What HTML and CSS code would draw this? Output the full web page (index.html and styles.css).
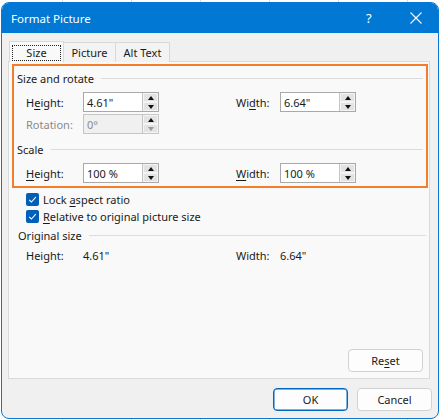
FILE: index.html
```html
<!DOCTYPE html>
<html>
<head>
<meta charset="utf-8">
<link rel="stylesheet" href="styles.css">
</head>
<body>
<div class="window">
  <div class="titlebar">
    <span class="title">Format Picture</span>
    <span class="help">?</span>
    <span class="close"><svg width="12" height="12" viewBox="0 0 12 12"><path d="M0.5 0.5L11.5 11.5M11.5 0.5L0.5 11.5" stroke="#fff" stroke-width="1.1" fill="none"/></svg></span>
  </div>
  <div class="client">
    <div class="tabs">
      <div class="tab active"><span class="focus">Size</span></div>
      <div class="tab t2">Picture</div>
      <div class="tab t3">Alt Text</div>
    </div>
    <div class="panel">
      <div class="highlight">
        <div class="group"><span>Size and rotate</span><i class="rule"></i></div>
        <div class="row r1">
          <div class="field"><label>H<u>e</u>ight:</label><div class="spin"><span class="val">4.61"</span><div class="btns"><b class="up"></b><b class="dn"></b></div></div></div>
          <div class="field f2"><label>Wi<u>d</u>th:</label><div class="spin"><span class="val">6.64"</span><div class="btns"><b class="up"></b><b class="dn"></b></div></div></div>
        </div>
        <div class="row r2 disabled">
          <div class="field"><label>Rotation:</label><div class="spin"><span class="val">0°</span><div class="btns"><b class="up"></b><b class="dn"></b></div></div></div>
        </div>
        <div class="group g2"><span>Scale</span><i class="rule"></i></div>
        <div class="row r3">
          <div class="field"><label><u>H</u>eight:</label><div class="spin"><span class="val">100 %</span><div class="btns"><b class="up"></b><b class="dn"></b></div></div></div>
          <div class="field f2"><label><u>W</u>idth:</label><div class="spin"><span class="val">100 %</span><div class="btns"><b class="up"></b><b class="dn"></b></div></div></div>
        </div>
      </div>
      <div class="check c1"><span class="box"><svg width="13" height="13" viewBox="0 0 13 13"><path d="M3.2 6.8L5.4 9L9.8 4.2" stroke="#fff" stroke-width="1.1" fill="none"/></svg></span><span>Lock <u>a</u>spect ratio</span></div>
      <div class="check c2"><span class="box"><svg width="13" height="13" viewBox="0 0 13 13"><path d="M3.2 6.8L5.4 9L9.8 4.2" stroke="#fff" stroke-width="1.1" fill="none"/></svg></span><span><u>R</u>elative to original picture size</span></div>
      <div class="group g3"><span>Original size</span><i class="rule"></i></div>
      <div class="info">
        <div class="ifield"><span class="ilabel">Height:</span><span>4.61"</span></div>
        <div class="ifield f2"><span class="ilabel">Width:</span><span>6.64"</span></div>
      </div>
      <div class="btn reset">Re<u>s</u>et</div>
    </div>
    <div class="footer">
      <div class="btn ok">OK</div>
      <div class="btn">Cancel</div>
    </div>
  </div>
</div>
</body>
</html>
```
FILE: styles.css
```css
* { box-sizing: border-box; }
html, body { margin: 0; padding: 0; }
body {
  width: 440px; height: 420px; overflow: hidden;
  background: #fff;
  background-image: repeating-linear-gradient(90deg, transparent 0 62px, #dcdcdc 62px 63px, transparent 63px 69px);
  font-family: "Noto Sans", "Open Sans", sans-serif;
  font-size: 11px;
  color: #1a1a1a;
  white-space: nowrap;
}
u { text-decoration-thickness: 1px; text-underline-offset: 2px; }
.window {
  margin: 2px 0 0 1px;
  width: 438px; height: 417px;
  border: 1px solid #0a78d4;
  border-radius: 8px;
  overflow: hidden;
  background: #f0f0f0;
  display: flex; flex-direction: column;
}
.titlebar {
  height: 30px; background: #0078d4; color: #fff;
  display: flex; align-items: center;
  font-size: 11.5px;
}
.title { margin-left: 9px; flex: 1; }
.help { width: 12px; margin-right: 32px; font-size: 13px; }
.close { width: 12px; height: 12px; margin-right: 16px; display: flex; }
.client { flex: 1; display: flex; flex-direction: column; }
.tabs { display: flex; align-items: flex-end; margin: 8px 0 -1px 7px; height: 21px; position: relative; z-index: 1; }
.tab {
  height: 20px; border: 1px solid #d9d9d9; border-bottom: none;
  background: #f3f3f3; display: flex; align-items: center; justify-content: center;
  margin-left: -1px;
}
.tab.t2 { width: 53px; }
.tab.t3 { width: 55px; }
.tab.active { height: 21px; width: 55px; background: #f9f9f9; margin-left: 0; padding: 2px 2px 1px; }
.focus { border: 1px dotted #222; width: 100%; height: 16px; display: flex; align-items: center; justify-content: center; }
.panel {
  margin-left: 6px; width: 422px; height: 318px;
  border: 1px solid #dadada; background: #f9f9f9;
  display: flex; flex-direction: column;
}
.highlight {
  margin: 2px 0 0 3px; width: 416px; height: 124px;
  border: 2px solid #f47d2a;
}
.group { display: flex; align-items: center; height: 16px; margin-top: 4px; padding-left: 3px; padding-right: 3px; }
.group .rule { flex: 1; height: 1px; background: #dcdcdc; margin-left: 7px; }
.group.g2 { margin-top: 7px; }
.group.g3 { margin-top: 4px; padding-left: 9px; padding-right: 3px; }
.row { display: flex; height: 20px; padding-left: 12px; align-items: center; }
.r1 { margin-top: 6px; }
.r2 { margin-top: 2px; }
.r3 { margin-top: 6px; }
.field { display: flex; align-items: center; width: 210px; flex-shrink: 0; }
.field.f2 { width: auto; }
.field label { width: 57px; }
.field.f2 label { width: 44px; }
.spin {
  width: 76px; height: 20px; border: 1px solid #a9a9a9; background: #fff;
  display: flex; align-items: center;
}
.spin .val { flex: 1; padding-left: 3px; }
.btns { width: 16px; height: 18px; display: flex; flex-direction: column; border-left: 1px solid #c4c4c4; }
.btns b { flex: 1; background: #e3e3e3; border: 1px solid #f4f4f4; position: relative; }
.btns b::after { content: ""; position: absolute; left: 4px; top: 2px; border-left: 3.5px solid transparent; border-right: 3.5px solid transparent; }
.btns .up::after { border-bottom: 4px solid #111; }
.btns .dn::after { border-top: 4px solid #111; top: 2px; }
.disabled label { color: #8a8a8a; }
.disabled .spin { background: #f0f0f0; border-color: #c6c6c6; }
.disabled .val { color: #8a8a8a; }
.disabled .btns .dn::after { border-top-color: #9a9a9a; }
.check { display: flex; align-items: center; height: 14px; padding-left: 17px; }
.c1 { margin-top: 4px; }
.c2 { margin-top: 3px; }
.box { width: 13px; height: 13px; border-radius: 2px; background: #005fb8; margin-right: 4px; display: flex; }
.info { display: flex; height: 16px; margin-top: 4px; padding-left: 17px; align-items: center; }
.ifield { width: 210px; display: flex; flex-shrink: 0; }
.ifield.f2 { width: auto; }
.ilabel { width: 57px; }
.ifield.f2 .ilabel { width: 44px; }
.btn {
  width: 75px; height: 23px; border: 1px solid #d1d1d1; border-radius: 4px;
  background: #fdfdfd; display: flex; align-items: center; justify-content: center;
}
.reset { margin-top: auto; margin-bottom: 6px; align-self: flex-end; margin-right: 6px; }
.footer { display: flex; justify-content: flex-end; gap: 9px; margin-top: 9px; padding-right: 6px; }
.ok { border-color: #0067c0; box-shadow: inset 0 0 0 0.5px #0067c0; }
```
